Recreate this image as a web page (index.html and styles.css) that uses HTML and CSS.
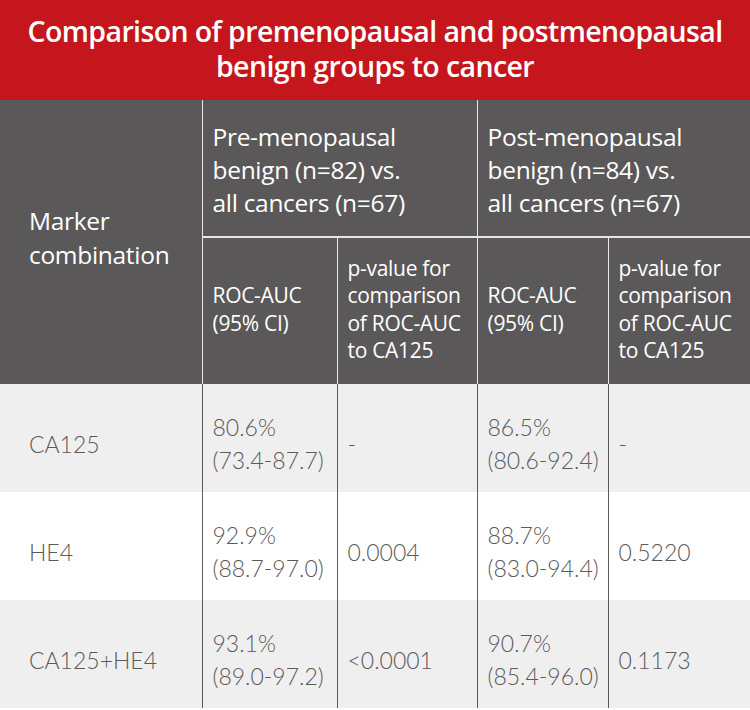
FILE: index.html
```html
<!DOCTYPE html>
<html>
<head>
<meta charset="utf-8">
<link rel="stylesheet" href="styles.css">
</head>
<body>
<div class="card">
  <div class="title">Comparison of premenopausal and postmenopausal<br>benign groups to cancer</div>
  <table class="tbl">
    <colgroup>
      <col class="c1"><col class="c2"><col class="c3"><col class="c4"><col class="c5">
    </colgroup>
    <thead>
      <tr class="h1">
        <th rowspan="2" class="first">Marker<br>combination</th>
        <th colspan="2" class="grp">Pre-menopausal<br>benign (n=82) vs.<br>all cancers (n=67)</th>
        <th colspan="2" class="grp">Post-menopausal<br>benign (n=84) vs.<br>all cancers (n=67)</th>
      </tr>
      <tr class="h2">
        <th class="sub">ROC-AUC<br>(95% CI)</th>
        <th class="sub">p-value for<br>comparison<br>of ROC-AUC<br>to CA125</th>
        <th class="sub">ROC-AUC<br>(95% CI)</th>
        <th class="sub">p-value for<br>comparison<br>of ROC-AUC<br>to CA125</th>
      </tr>
    </thead>
    <tbody>
      <tr class="r alt">
        <td class="first">CA125</td>
        <td>80.6%<br>(73.4-87.7)</td>
        <td>-</td>
        <td>86.5%<br>(80.6-92.4)</td>
        <td>-</td>
      </tr>
      <tr class="r">
        <td class="first">HE4</td>
        <td>92.9%<br>(88.7-97.0)</td>
        <td>0.0004</td>
        <td>88.7%<br>(83.0-94.4)</td>
        <td>0.5220</td>
      </tr>
      <tr class="r alt last">
        <td class="first">CA125+HE4</td>
        <td>93.1%<br>(89.0-97.2)</td>
        <td>&lt;0.0001</td>
        <td>90.7%<br>(85.4-96.0)</td>
        <td>0.1173</td>
      </tr>
    </tbody>
  </table>
</div>
</body>
</html>
```

FILE: styles.css
```css
html, body {
  margin: 0;
  padding: 0;
  background: #ffffff;
}
.card {
  width: 750px;
  height: 710px;
  overflow: hidden;
  font-family: "Open Sans", "Noto Sans", sans-serif;
}
.title {
  height: 100px;
  box-sizing: border-box;
  background: #c5161d;
  color: #ffffff;
  font-weight: 600;
  font-size: 28.5px;
  line-height: 35px;
  letter-spacing: -0.6px;
  text-align: center;
  padding-top: 14px;
}
.tbl {
  width: 750px;
  border-collapse: collapse;
  table-layout: fixed;
}
.c1 { width: 202px; }
.c2 { width: 135px; }
.c3 { width: 140px; }
.c4 { width: 131px; }
.c5 { width: 142px; }
thead th {
  background: #5a5859;
  color: #ffffff;
  font-weight: 400;
  text-align: left;
  vertical-align: middle;
  padding: 0 0 0 10px;
  border-left: 1px solid #e6e6e6;
  letter-spacing: -0.3px;
}
thead th.first {
  border-left: none;
  padding-left: 29px;
  padding-bottom: 8px;
  font-size: 24.5px;
  line-height: 34px;
}
.h1 { height: 137px; }
.h1 th.grp {
  font-size: 24.5px;
  line-height: 33px;
  border-bottom: 2px solid #e6e6e6;
  padding-top: 2px;
}
.h2 { height: 147px; }
.h2 th.sub {
  font-size: 21px;
  line-height: 27.5px;
  padding-bottom: 3px;
}
tbody td {
  color: #5a5a5a;
  font-family: "Lato", "Open Sans", sans-serif;
  font-weight: 300;
  font-size: 23px;
  line-height: 33px;
  padding: 12px 0 0 10px;
  vertical-align: middle;
  border-left: 1px solid #5a5a5a;
}
tbody td.first {
  border-left: none;
  padding-left: 29px;
}
.r { height: 108px; background: #ffffff; }
.r.alt { background: #efefef; }
```
